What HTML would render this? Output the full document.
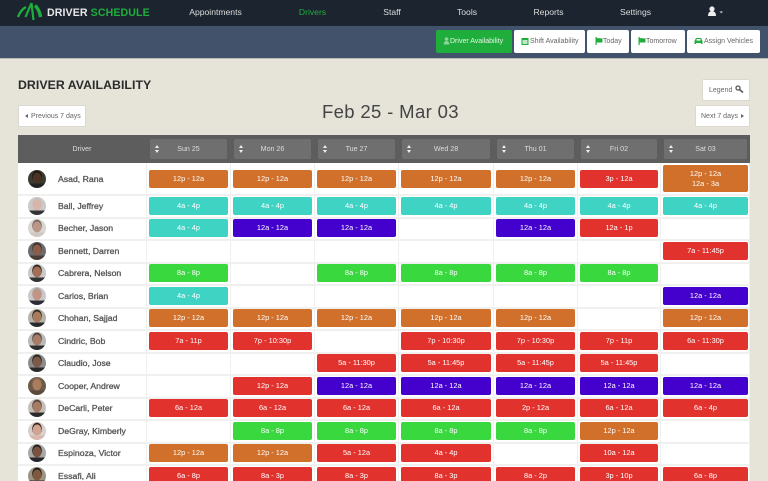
<!DOCTYPE html>
<html><head><meta charset="utf-8"><style>
*{box-sizing:border-box}
html,body{margin:0;padding:0;width:768px;height:481px;overflow:hidden}
#w{width:768px;height:481px;overflow:hidden;position:relative;background:#e6e3d8;font-family:"Liberation Sans",sans-serif;color:#444}
.a{position:absolute;white-space:nowrap}
#nav{left:0;top:0;width:768px;height:26px;background:#1c2430}
#sub{left:0;top:26px;width:768px;height:33px;background:#41526a;border-bottom:1px solid #b9bab6}
.n{top:0;height:26px;line-height:25px;font-size:8.6px;color:#ddd;transform:translateX(-50%)}
.tb{top:30px;height:23px;line-height:23px;background:#fff;border-radius:2px;font-size:7px;color:#666;text-align:left}
.wb{background:#fff;border:1px solid #dbd9cf;border-radius:2px;font-size:7px;color:#666;text-align:left}
#thead{left:18px;top:135px;width:732px;height:28px;background:#5d5d5d}
.hb{top:139px;height:20px;line-height:20px;background:#6f6f6f;border-radius:2px;font-size:7.1px;color:#ddd;text-align:center}
.hb i{position:absolute;left:5px;top:6px;width:5px;height:8px;font-style:normal}
.hb i:before,.hb i:after{content:"";position:absolute;left:0;border-left:2.5px solid transparent;border-right:2.5px solid transparent}
.hb i:before{top:0;border-bottom:3px solid #eee}
.hb i:after{bottom:0;border-top:3px solid #eee}
#tb{left:18px;top:163px;width:732px;height:318px;background:#fff}
.l{left:18px;width:732px;height:2px;background:#f0f0ee}
.v{top:163px;width:1px;height:318px;background:#efefed}
.nm{left:58px;width:88px;font-size:8.7px;-webkit-text-stroke:.3px #555;color:#555;height:14px;line-height:14px}
.av{position:absolute;left:28px;width:18px;height:18px;border-radius:50%;filter:blur(.35px);background:radial-gradient(ellipse 4.6px 5.8px at 50% 44%,var(--s) 88%,transparent 100%),radial-gradient(ellipse 5px 6.4px at 50% 38%,var(--h) 92%,transparent 100%),linear-gradient(transparent 76%,var(--c) 76%),var(--b)}
.p{position:absolute;height:18px;line-height:18px;border-radius:2px;color:#fff;font-size:7.4px;text-align:center}
.c1{left:149px;width:79px}.c2{left:233px;width:79px}.c3{left:317px;width:79px}.c4{left:401px;width:90px}.c5{left:496px;width:79px}.c6{left:580px;width:78px}.c7{left:663px;width:85px}
.o{background:#d0702a}.t{background:#3fd3c3}.u{background:#4400cc}.r{background:#e2322e}.g{background:#38d83e}
</style></head><body><div id="w">
<div class="a" id="nav"></div>
<svg class="a" style="left:0;top:0" width="46" height="24" viewBox="0 0 46 24" fill="none"><path d="M18 17 Q20.500 10 26 7" stroke="#1fae3c" stroke-width="2.400"/><path d="M35 5.500 Q39.500 9.500 40.500 17" stroke="#1fae3c" stroke-width="3.400"/><path d="M31.500 3 L25.500 17 M31.500 3 L33.500 20" stroke="#1fae3c" stroke-width="2.200"/></svg>
<div class="a" style="left:47px;top:5px;height:16px;line-height:16px;font-size:10.600px;font-weight:bold;letter-spacing:.1px;color:#e8e8e8">DRIVER <span style="color:#1fae3c">SCHEDULE</span></div>
<div class="a n" style="left:215.500px">Appointments</div>
<div class="a n" style="left:312.500px;color:#1fae3c">Drivers</div>
<div class="a n" style="left:392px">Staff</div>
<div class="a n" style="left:467px">Tools</div>
<div class="a n" style="left:548.500px">Reports</div>
<div class="a n" style="left:635.500px">Settings</div>
<svg class="a" style="left:707px;top:6px" width="18" height="12" viewBox="0 0 18 12"><circle cx="5" cy="3" r="2.600" fill="#eee"/><path d="M1 10 Q1 6 3.500 5.500 L6.500 5.500 Q9 6 9 10 Z" fill="#eee"/><path d="M12.500 5.500 L16 5.500 L14.200 7.300 Z" fill="#ddd"/></svg>
<div class="a" id="sub"></div>
<div class="a tb" style="left:436px;width:76px;background:#1fae3c;color:#e8f5e8;padding-left:14px">Driver Availability</div>
<svg class="a" style="left:443px;top:37px" width="7" height="8" viewBox="0 0 7 8"><circle cx="3.500" cy="2" r="1.800" fill="#8ed49a"/><path d="M.7 7.500 Q.7 4 3.500 4 Q6.300 4 6.300 7.500Z" fill="#8ed49a"/></svg>
<div class="a tb" style="left:514px;width:71px;padding-left:16px">Shift Availability</div>
<svg class="a" style="left:521px;top:37px" width="8" height="8" viewBox="0 0 8 8"><rect x=".5" y="1" width="7" height="7" fill="#1fae3c"/><rect x="1.500" y="3" width="5" height="4" fill="#bfe6c6"/></svg>
<div class="a tb" style="left:587px;width:42px;padding-left:16px">Today</div>
<svg class="a" style="left:595px;top:37px" width="8" height="8" viewBox="0 0 8 8"><rect x=".5" y="0" width="1.200" height="8" fill="#1fae3c"/><path d="M1.500 1 L7.500 1.500 L7.500 5.500 L1.500 5.500Z" fill="#1fae3c"/></svg>
<div class="a tb" style="left:631px;width:54px;padding-left:15px">Tomorrow</div>
<svg class="a" style="left:638px;top:37px" width="8" height="8" viewBox="0 0 8 8"><rect x=".5" y="0" width="1.200" height="8" fill="#1fae3c"/><path d="M1.500 1 L7.500 1.500 L7.500 5.500 L1.500 5.500Z" fill="#1fae3c"/></svg>
<div class="a tb" style="left:687px;width:73px;padding-left:17px">Assign Vehicles</div>
<svg class="a" style="left:694px;top:37px" width="9" height="8" viewBox="0 0 9 8"><path d="M.5 7 V4 L2 1 H7 L8.500 4 V7 H7 V6 H2 V7 Z" fill="#1fae3c"/><rect x="2.500" y="2" width="4" height="1.600" fill="#fff"/></svg>

<div class="a" style="left:18px;top:76px;height:18px;line-height:18px;font-size:12.300px;font-weight:bold;letter-spacing:.05px;color:#2b2b2b">DRIVER AVAILABILITY</div>
<div class="a" style="left:322px;top:100px;height:24px;line-height:24px;font-size:18.500px;color:#444;letter-spacing:.35px">Feb 25 - Mar 03</div>
<div class="a wb" style="left:18px;top:105px;width:68px;height:22px;line-height:22px;padding-left:12px">Previous 7 days</div>
<div class="a" style="left:25px;top:114px;border-right:3px solid #666;border-top:2.500px solid transparent;border-bottom:2.500px solid transparent"></div>
<div class="a wb" style="left:702px;top:79px;width:48px;height:22px;line-height:22px;padding-left:6px">Legend</div>
<svg class="a" style="left:735px;top:85px" width="9" height="9" viewBox="0 0 9 9"><circle cx="3" cy="3" r="2" fill="none" stroke="#555" stroke-width="1.300"/><path d="M4.500 4.500 L8 7.500" stroke="#555" stroke-width="1.600"/></svg>
<div class="a wb" style="left:695px;top:105px;width:55px;height:22px;line-height:22px;padding-left:5px">Next 7 days</div>
<div class="a" style="left:741px;top:114px;border-left:3px solid #666;border-top:2.500px solid transparent;border-bottom:2.500px solid transparent"></div>

<div class="a" id="thead"></div>
<div class="a" style="left:18px;top:139px;width:128px;height:20px;line-height:20px;font-size:7.100px;color:#ddd;text-align:center">Driver</div>
<div class="a hb" style="left:150px;width:77px"><i></i>Sun 25</div>
<div class="a hb" style="left:234px;width:77px"><i></i>Mon 26</div>
<div class="a hb" style="left:318px;width:77px"><i></i>Tue 27</div>
<div class="a hb" style="left:402px;width:88px"><i></i>Wed 28</div>
<div class="a hb" style="left:497px;width:77px"><i></i>Thu 01</div>
<div class="a hb" style="left:581px;width:76px"><i></i>Fri 02</div>
<div class="a hb" style="left:664px;width:83px"><i></i>Sat 03</div>

<div class="a" id="tb"></div>
<div class="a v" style="left:146px"></div><div class="a v" style="left:230px"></div><div class="a v" style="left:314px"></div><div class="a v" style="left:398px"></div><div class="a v" style="left:493px"></div><div class="a v" style="left:577px"></div><div class="a v" style="left:660px"></div><div class="a v" style="left:749px"></div>
<div class="a l" style="top:194px"></div><div class="a l" style="top:217px"></div><div class="a l" style="top:239px"></div><div class="a l" style="top:262px"></div><div class="a l" style="top:284px"></div><div class="a l" style="top:307px"></div><div class="a l" style="top:329px"></div><div class="a l" style="top:352px"></div><div class="a l" style="top:374px"></div><div class="a l" style="top:397px"></div><div class="a l" style="top:419px"></div><div class="a l" style="top:442px"></div><div class="a l" style="top:464px"></div>

<div class="av" style="top:170px;--b:#3a3a30;--s:#4a3322;--h:#17120e;--c:#222"></div><div class="a nm" style="top:172px">Asad, Rana</div>
<div class="p o c1" style="top:170px">12p - 12a</div><div class="p o c2" style="top:170px">12p - 12a</div><div class="p o c3" style="top:170px">12p - 12a</div><div class="p o c4" style="top:170px">12p - 12a</div><div class="p o c5" style="top:170px">12p - 12a</div><div class="p r c6" style="top:170px">3p - 12a</div><div class="p o c7" style="top:165px;height:27px;line-height:9.500px;padding-top:4px">12p - 12a<br>12a - 3a</div>

<div class="av" style="top:197px;--b:#c9c9cc;--s:#d8b5a8;--h:#c9c0bc;--c:#333"></div><div class="a nm" style="top:199px">Ball, Jeffrey</div>
<div class="p t c1" style="top:197px">4a - 4p</div><div class="p t c2" style="top:197px">4a - 4p</div><div class="p t c3" style="top:197px">4a - 4p</div><div class="p t c4" style="top:197px">4a - 4p</div><div class="p t c5" style="top:197px">4a - 4p</div><div class="p t c6" style="top:197px">4a - 4p</div><div class="p t c7" style="top:197px">4a - 4p</div>

<div class="av" style="top:219px;--b:#d8d6d2;--s:#b99686;--h:#77665c;--c:#cfc8c0"></div><div class="a nm" style="top:221px">Becher, Jason</div>
<div class="p t c1" style="top:219px">4a - 4p</div><div class="p u c2" style="top:219px">12a - 12a</div><div class="p u c3" style="top:219px">12a - 12a</div><div class="p u c5" style="top:219px">12a - 12a</div><div class="p r c6" style="top:219px">12a - 1p</div>

<div class="av" style="top:242px;--b:#6c6c70;--s:#8a5d48;--h:#3a2c26;--c:#4a3c36"></div><div class="a nm" style="top:244px">Bennett, Darren</div>
<div class="p r c7" style="top:242px">7a - 11:45p</div>

<div class="av" style="top:264px;--b:#c8c8c8;--s:#a56f55;--h:#2b211c;--c:#333"></div><div class="a nm" style="top:266px">Cabrera, Nelson</div>
<div class="p g c1" style="top:264px">8a - 8p</div><div class="p g c3" style="top:264px">8a - 8p</div><div class="p g c4" style="top:264px">8a - 8p</div><div class="p g c5" style="top:264px">8a - 8p</div><div class="p g c6" style="top:264px">8a - 8p</div>

<div class="av" style="top:287px;--b:#c9c9cc;--s:#c49482;--h:#aaa49e;--c:#2c2c34"></div><div class="a nm" style="top:289px">Carlos, Brian</div>
<div class="p t c1" style="top:287px">4a - 4p</div><div class="p u c7" style="top:287px">12a - 12a</div>

<div class="av" style="top:309px;--b:#b5b2a8;--s:#a87a5e;--h:#2e2620;--c:#2a2a2a"></div><div class="a nm" style="top:311px">Chohan, Sajjad</div>
<div class="p o c1" style="top:309px">12p - 12a</div><div class="p o c2" style="top:309px">12p - 12a</div><div class="p o c3" style="top:309px">12p - 12a</div><div class="p o c4" style="top:309px">12p - 12a</div><div class="p o c5" style="top:309px">12p - 12a</div><div class="p o c7" style="top:309px">12p - 12a</div>

<div class="av" style="top:332px;--b:#b9b9b9;--s:#a87c66;--h:#4a3e38;--c:#2e2e2e"></div><div class="a nm" style="top:334px">Cindric, Bob</div>
<div class="p r c1" style="top:332px">7a - 11p</div><div class="p r c2" style="top:332px">7p - 10:30p</div><div class="p r c4" style="top:332px">7p - 10:30p</div><div class="p r c5" style="top:332px">7p - 10:30p</div><div class="p r c6" style="top:332px">7p - 11p</div><div class="p r c7" style="top:332px">6a - 11:30p</div>

<div class="av" style="top:354px;--b:#8c8c8c;--s:#7c5a48;--h:#241e1a;--c:#2a2a2a"></div><div class="a nm" style="top:356px">Claudio, Jose</div>
<div class="p r c3" style="top:354px">5a - 11:30p</div><div class="p r c4" style="top:354px">5a - 11:45p</div><div class="p r c5" style="top:354px">5a - 11:45p</div><div class="p r c6" style="top:354px">5a - 11:45p</div>

<div class="av" style="top:377px;--b:#6c5a4a;--s:#ab7c5e;--h:#8a6a50;--c:#5a4a3c"></div><div class="a nm" style="top:379px">Cooper, Andrew</div>
<div class="p r c2" style="top:377px">12p - 12a</div><div class="p u c3" style="top:377px">12a - 12a</div><div class="p u c4" style="top:377px">12a - 12a</div><div class="p u c5" style="top:377px">12a - 12a</div><div class="p u c6" style="top:377px">12a - 12a</div><div class="p u c7" style="top:377px">12a - 12a</div>

<div class="av" style="top:399px;--b:#c4c0b8;--s:#a87c64;--h:#51443c;--c:#2a2a2a"></div><div class="a nm" style="top:401px">DeCarli, Peter</div>
<div class="p r c1" style="top:399px">6a - 12a</div><div class="p r c2" style="top:399px">6a - 12a</div><div class="p r c3" style="top:399px">6a - 12a</div><div class="p r c4" style="top:399px">6a - 12a</div><div class="p r c5" style="top:399px">2p - 12a</div><div class="p r c6" style="top:399px">6a - 12a</div><div class="p r c7" style="top:399px">6a - 4p</div>

<div class="av" style="top:422px;--b:#d5d0cc;--s:#d0a490;--h:#3c1e1c;--c:#d9b8b0"></div><div class="a nm" style="top:424px">DeGray, Kimberly</div>
<div class="p g c2" style="top:422px">8a - 8p</div><div class="p g c3" style="top:422px">8a - 8p</div><div class="p g c4" style="top:422px">8a - 8p</div><div class="p g c5" style="top:422px">8a - 8p</div><div class="p o c6" style="top:422px">12p - 12a</div>

<div class="av" style="top:444px;--b:#a8a8a8;--s:#7a5240;--h:#1e1a18;--c:#26262c"></div><div class="a nm" style="top:446px">Espinoza, Victor</div>
<div class="p o c1" style="top:444px">12p - 12a</div><div class="p o c2" style="top:444px">12p - 12a</div><div class="p r c3" style="top:444px">5a - 12a</div><div class="p r c4" style="top:444px">4a - 4p</div><div class="p r c6" style="top:444px">10a - 12a</div>

<div class="av" style="top:467px;--b:#9c9484;--s:#80583e;--h:#1a1612;--c:#2a2a2a"></div><div class="a nm" style="top:469px">Essafi, Ali</div>
<div class="p r c1" style="top:467px">6a - 8p</div><div class="p r c2" style="top:467px">8a - 3p</div><div class="p r c3" style="top:467px">8a - 3p</div><div class="p r c4" style="top:467px">8a - 3p</div><div class="p r c5" style="top:467px">8a - 2p</div><div class="p r c6" style="top:467px">3p - 10p</div><div class="p r c7" style="top:467px">6a - 8p</div>
</div></body></html>
